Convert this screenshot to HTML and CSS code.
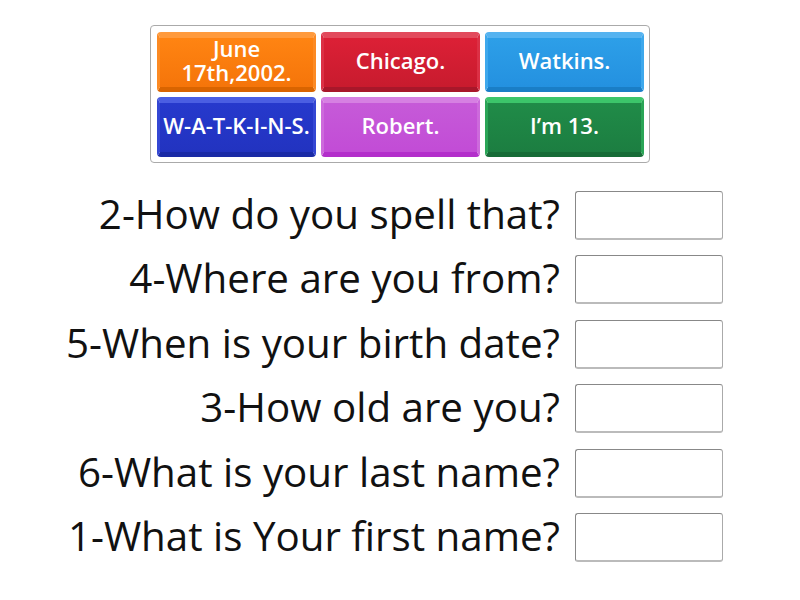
FILE: index.html
```html
<!DOCTYPE html>
<html>
<head>
<meta charset="utf-8">
<link rel="stylesheet" href="styles.css">
</head>
<body>
<div class="page">
  <div class="bank">
    <div class="tile orange">June<br>17th,2002.</div>
    <div class="tile red">Chicago.</div>
    <div class="tile sky">Watkins.</div>
    <div class="tile blue">W-A-T-K-I-N-S.</div>
    <div class="tile purple">Robert.</div>
    <div class="tile green">I’m 13.</div>
  </div>
  <div class="questions">
    <div class="q">2-How do you spell that?</div><div class="box"></div>
    <div class="q">4-Where are you from?</div><div class="box"></div>
    <div class="q">5-When is your birth date?</div><div class="box"></div>
    <div class="q">3-How old are you?</div><div class="box"></div>
    <div class="q">6-What is your last name?</div><div class="box"></div>
    <div class="q">1-What is Your first name?</div><div class="box"></div>
  </div>
</div>
</body>
</html>
```

FILE: styles.css
```css
html, body {
  margin: 0;
  padding: 0;
  background: #fff;
}
.page {
  width: 800px;
  height: 600px;
  font-family: "Open Sans", "Noto Sans", sans-serif;
  padding-top: 25px;
  box-sizing: border-box;
}
.bank {
  width: 500px;
  height: 138px;
  margin: 0 auto;
  box-sizing: border-box;
  border: 1px solid #aaa;
  border-radius: 4px;
  padding: 6px;
  display: grid;
  grid-template-columns: repeat(3, 159px);
  grid-template-rows: repeat(2, 60px);
  column-gap: 5px;
  row-gap: 5px;
}
.tile {
  box-sizing: border-box;
  border-radius: 4px;
  border-style: solid;
  border-width: 6px 3px 5px 3px;
  padding-bottom: 6px;
  color: #fff;
  font-weight: 600;
  font-size: 22px;
  line-height: 24px;
  display: flex;
  align-items: center;
  justify-content: center;
  text-align: center;
  white-space: nowrap;
}
.orange { background: linear-gradient(#ff8412, #f5750a); border-color: #ff9a3c #fc8a24 #d96400 #fc8a24; }
.red { background: linear-gradient(#dc2036, #c81b2e); border-color: #e24a5c #dc3045 #a8172a #dc3045; }
.sky { background: linear-gradient(#2d9fe8, #2491e0); border-color: #55b3f0 #3ea8ec #1a7ec6 #3ea8ec; }
.blue { background: linear-gradient(#2639cc, #2233c0); border-color: #4a5ee2 #3447d4 #1a2aa6 #3447d4; }
.purple { background: linear-gradient(#c65ad8, #c24cd6); border-color: #d680e2 #cd6adc #b32ecb #cd6adc; }
.green { background: linear-gradient(#208b48, #1c7e41); border-color: #3cc56a #2aa556 #176c37 #2aa556; }
.questions {
  margin-top: 28px;
  display: grid;
  grid-template-columns: 1fr 148px;
  grid-auto-rows: 49px;
  row-gap: 15.4px;
  column-gap: 15px;
  padding-right: 77px;
}
.q {
  text-align: right;
  font-size: 40.3px;
  line-height: 45px;
  color: #111;
  white-space: nowrap;
}
.box {
  box-sizing: border-box;
  border: 1px solid #888;
  border-bottom: 2px solid #bbb;
  border-right-color: #aaa;
  border-radius: 3px;
  background: #fff;
}
```
